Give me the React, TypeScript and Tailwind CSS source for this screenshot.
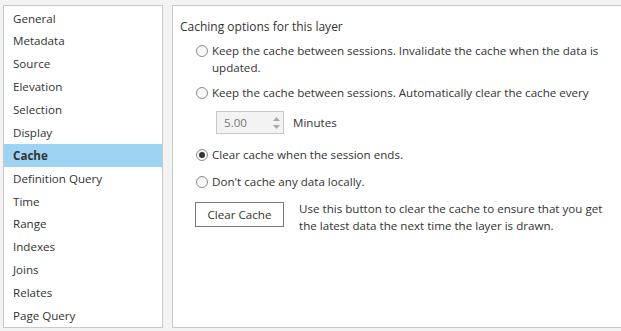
import React from "react";

const items = [
  "General",
  "Metadata",
  "Source",
  "Elevation",
  "Selection",
  "Display",
  "Cache",
  "Definition Query",
  "Time",
  "Range",
  "Indexes",
  "Joins",
  "Relates",
  "Page Query",
];

function Radio({ checked }: { checked?: boolean }) {
  return (
    <span className="w-[12px] h-[12px] rounded-full border border-[#8a8a8a] bg-gradient-to-b from-[#f4f4f4] to-[#ffffff] flex items-center justify-center shrink-0">
      {checked && <span className="w-[6px] h-[6px] rounded-full bg-[#333]" />}
    </span>
  );
}

export default function App() {
  return (
    <div
      className="w-[621px] h-[331px] bg-[#f3f3f3] overflow-hidden flex items-start pt-[5px] pl-[3px] gap-[9px] text-[#333] text-[11.6px]"
      style={{ fontFamily: '"Open Sans", "Liberation Sans", sans-serif' }}
    >
      <div className="w-[160px] h-[323px] shrink-0 bg-white border border-[#c9c9c9] flex flex-col pt-[1px]">
        {items.map((it) => (
          <div
            key={it}
            className={
              "h-[23px] flex items-center pl-[9px] leading-none " +
              (it === "Cache" ? "bg-[#9fd3f3] font-bold" : "")
            }
          >
            {it}
          </div>
        ))}
      </div>
      <div className="w-[470px] h-[323px] shrink-0 bg-white border border-[#c9c9c9] pl-[7px] pt-[13px] flex flex-col">
        <div className="h-[16px] leading-[16px] text-[12px]">Caching options for this layer</div>
        <div className="pl-[16px] pt-[7px] flex flex-col">
          <div className="flex items-start gap-[4px]">
            <span className="mt-[3px]"><Radio /></span>
            <div className="leading-[17px] w-[400px]">
              Keep the cache between sessions. Invalidate the cache when the data is updated.
            </div>
          </div>
          <div className="flex items-start gap-[4px] mt-[8px]">
            <span className="mt-[3px]"><Radio /></span>
            <div className="leading-[17px]">
              Keep the cache between sessions. Automatically clear the cache every
            </div>
          </div>
          <div className="flex items-center gap-[9px] mt-[10px] pl-[20px]">
            <div className="w-[68px] h-[23px] border border-[#c8c8c8] bg-[#f3f3f3] flex items-center justify-between pl-[7px] pr-[3px]">
              <span className="text-[#777]">5.00</span>
              <span className="flex flex-col gap-[4px] items-center">
                <svg width="7" height="4" viewBox="0 0 7 4"><path d="M0 4 L3.5 0 L7 4 Z" fill="#a8a8a8" /></svg>
                <svg width="7" height="4" viewBox="0 0 7 4"><path d="M0 0 L3.5 4 L7 0 Z" fill="#a8a8a8" /></svg>
              </span>
            </div>
            <span>Minutes</span>
          </div>
          <div className="flex items-center gap-[4px] mt-[12px] h-[17px]">
            <Radio checked />
            <span>Clear cache when the session ends.</span>
          </div>
          <div className="flex items-center gap-[4px] mt-[10px] h-[17px]">
            <Radio />
            <span>Don't cache any data locally.</span>
          </div>
          <div className="flex items-start gap-[15px] mt-[12px] -ml-[1px]">
            <div className="w-[89px] h-[25px] border border-[#7a7a7a] bg-white flex items-center justify-center">
              Clear Cache
            </div>
            <div className="leading-[17px] -mt-[2px]">
              Use this button to clear the cache to ensure that you get
              <br />
              the latest data the next time the layer is drawn.
            </div>
          </div>
        </div>
      </div>
    </div>
  );
}
